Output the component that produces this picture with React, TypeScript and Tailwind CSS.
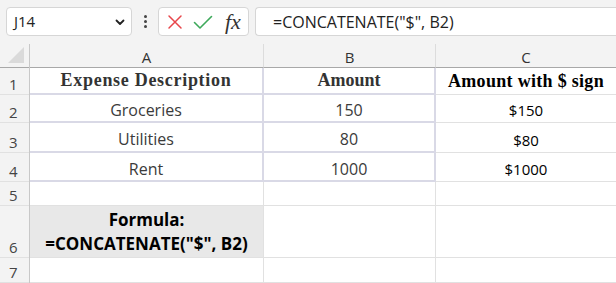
import React from "react";

const ui = { fontFamily: '"Open Sans", "Noto Sans", sans-serif' };
const serif = { fontFamily: '"Liberation Serif", "Times New Roman", serif' };

const rows = [
  { n: "1", h: "h-[27px]" },
  { n: "2", h: "h-[28px]" },
  { n: "3", h: "h-[30px]" },
  { n: "4", h: "h-[29px]" },
  { n: "5", h: "h-[24px]" },
  { n: "6", h: "h-[52px]" },
  { n: "7", h: "h-[25px]" },
];

const data = [
  ["Groceries", "150", "$150"],
  ["Utilities", "80", "$80"],
  ["Rent", "1000", "$1000"],
];

function Toolbar() {
  return (
    <div className="flex h-[44px] items-start bg-[#f3f3f3] pt-[7px] pl-[6px]" style={ui}>
      {/* Name box */}
      <div className="flex h-[29px] w-[126px] items-center justify-between rounded-[4px] border border-[#d6d6d6] bg-white pl-[7px] pr-[5px]">
        <span className="text-[15px] text-[#222]">J14</span>
        <svg width="12" height="12" viewBox="0 0 12 12" fill="none" stroke="#222" strokeWidth="1.8" strokeLinecap="round" strokeLinejoin="round">
          <path d="M2.5 4.5 6 8l3.5-3.5" />
        </svg>
      </div>
      {/* dots */}
      <div className="flex h-[29px] w-[26px] flex-col items-center justify-center gap-[2px]">
        <span className="h-[3px] w-[3px] rounded-full bg-[#444]" />
        <span className="h-[3px] w-[3px] rounded-full bg-[#444]" />
        <span className="h-[3px] w-[3px] rounded-full bg-[#444]" />
      </div>
      {/* function box */}
      <div className="flex h-[29px] w-[91px] items-center gap-[10px] rounded-[4px] border border-[#d6d6d6] bg-white pl-[8px]">
        <svg width="16" height="16" viewBox="0 0 16 16" fill="none" stroke="#e8464b" strokeWidth="1.5" strokeLinecap="round">
          <path d="M2 2l12 12M14 2 2 14" />
        </svg>
        <svg width="20" height="16" viewBox="0 0 20 16" fill="none" stroke="#3ea95b" strokeWidth="1.6" strokeLinecap="round" strokeLinejoin="round">
          <path d="M1.5 8.5 7 14 18.5 2.5" />
        </svg>
        <span className="ml-[2px] text-[22px] italic leading-none text-[#333]" style={serif}>fx</span>
      </div>
      {/* formula bar */}
      <div className="ml-[6px] flex h-[29px] flex-1 items-center rounded-l-[4px] border border-r-0 border-[#d6d6d6] bg-white pl-[17px]">
        <span className="text-[16px] text-[#222]">=CONCATENATE("$", B2)</span>
      </div>
    </div>
  );
}

function Grid() {
  return (
    <div className="flex" style={ui}>
      {/* row headers */}
      <div className="w-[30px] border-r border-[#c8c8c8] bg-[#f3f3f3]">
        <div className="relative h-[24px] border-b border-[#a8a8a8]">
          <div className="absolute right-[5px] bottom-[4px] h-0 w-0 border-b-[16px] border-l-[16px] border-b-[#dadada] border-l-transparent" />
        </div>
        {rows.map((r) => (
          <div key={r.n} className={`${r.h} flex items-end border-b border-[#e1e1e1] pl-[9px] text-[15px] leading-[20px] text-[#444]`}>
            {r.n}
          </div>
        ))}
      </div>
      {/* column A */}
      <div className="w-[234px]">
        <div className="flex h-[24px] items-end justify-center border-r border-b border-r-[#dcdcdc] border-b-[#a8a8a8] bg-[#f3f3f3] text-[15px] leading-[20px] text-[#333]">A</div>
        <div className={`${rows[0].h} flex items-center justify-center border-r-2 border-b-2 border-[#d9d9e6] text-[18px] font-bold tracking-[0.7px] text-[#333]`} style={serif}>
          Expense Description
        </div>
        {data.map((d, i) => (
          <div key={d[0]} className={`${rows[i + 1].h} flex items-center justify-center border-r-2 border-b-2 border-[#d9d9e6] pt-[4px] text-[16px] text-[#3b3b3b]`}>
            {d[0]}
          </div>
        ))}
        <div className={`${rows[4].h} border-r border-b border-[#e1e1e1]`} />
        <div className={`${rows[5].h} flex flex-col items-center justify-end border-r border-b border-[#e1e1e1] bg-[#e8e8e8] pb-[1px] text-[17px] leading-[24px] font-bold text-black`}>
          <span>Formula:</span>
          <span>=CONCATENATE("$", B2)</span>
        </div>
        <div className={`${rows[6].h} border-r border-b border-[#e1e1e1]`} />
      </div>
      {/* column B */}
      <div className="w-[172px]">
        <div className="flex h-[24px] items-end justify-center border-r border-b border-r-[#dcdcdc] border-b-[#a8a8a8] bg-[#f3f3f3] text-[15px] leading-[20px] text-[#333]">B</div>
        <div className={`${rows[0].h} flex items-center justify-center border-r-2 border-b-2 border-[#d9d9e6] text-[18px] font-bold text-[#333]`} style={serif}>
          Amount
        </div>
        {data.map((d, i) => (
          <div key={d[1]} className={`${rows[i + 1].h} flex items-center justify-center border-r-2 border-b-2 border-[#d9d9e6] pt-[4px] text-[16px] text-[#3b3b3b]`}>
            {d[1]}
          </div>
        ))}
        <div className={`${rows[4].h} border-r border-b border-[#e1e1e1]`} />
        <div className={`${rows[5].h} border-r border-b border-[#e1e1e1]`} />
        <div className={`${rows[6].h} border-r border-b border-[#e1e1e1]`} />
      </div>
      {/* column C */}
      <div className="flex-1">
        <div className="flex h-[24px] items-end justify-center border-b border-[#a8a8a8] bg-[#f3f3f3] text-[15px] leading-[20px] text-[#333]">C</div>
        <div className={`${rows[0].h} flex items-center justify-center border-b border-[#e1e1e1] text-[18px] font-bold tracking-[0.3px] text-black`} style={serif}>
          Amount with $ sign
        </div>
        {data.map((d, i) => (
          <div key={d[2]} className={`${rows[i + 1].h} flex items-end justify-center border-b border-[#e1e1e1] pb-[1px] text-[15px] text-black`}>
            {d[2]}
          </div>
        ))}
        <div className={`${rows[4].h} border-b border-[#e1e1e1]`} />
        <div className={`${rows[5].h} border-b border-[#e1e1e1]`} />
        <div className={`${rows[6].h} border-b border-[#e1e1e1]`} />
      </div>
    </div>
  );
}

export default function App() {
  return (
    <div className="h-[283px] w-[616px] overflow-hidden bg-white">
      <Toolbar />
      <Grid />
    </div>
  );
}
